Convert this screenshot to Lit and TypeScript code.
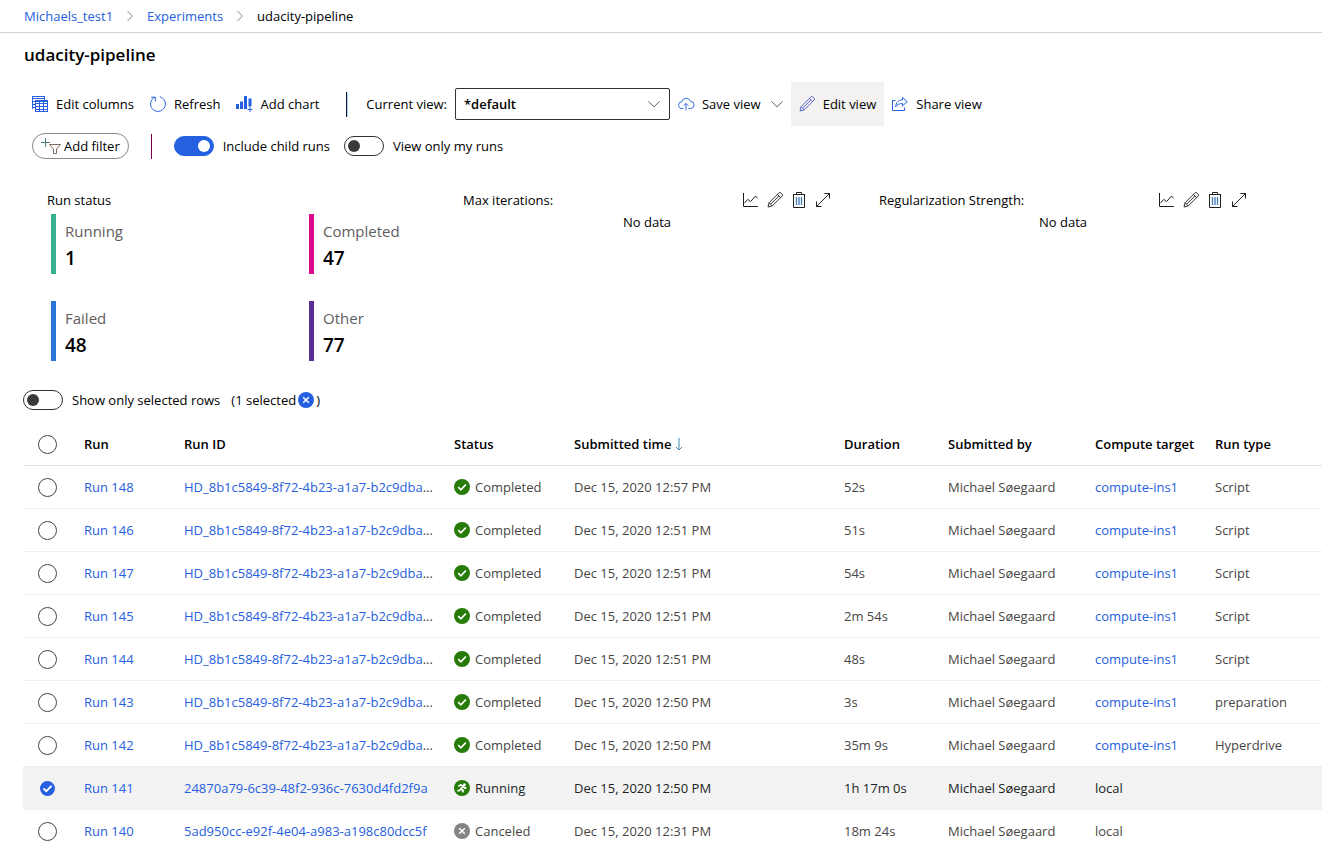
import { LitElement, html, css, svg, nothing } from "lit";
import { customElement, property, state } from "lit/decorators.js";
import { classMap } from "lit/directives/class-map.js";

type Status = "Completed" | "Running" | "Canceled";

interface Run {
  name: string;
  id: string;
  clipped?: boolean;
  status: Status;
  time: string;
  duration: string;
  by: string;
  target: string;
  linked?: boolean;
  type: string;
}

const hd = (n: number, time: string, duration: string, type: string): Run => ({
  name: `Run ${n}`,
  id: "HD_8b1c5849-8f72-4b23-a1a7-b2c9dba",
  clipped: true,
  status: "Completed",
  time: `Dec 15, 2020 ${time} PM`,
  duration,
  by: "Michael Søegaard",
  target: "compute-ins1",
  linked: true,
  type,
});

const RUNS: Run[] = [
  hd(148, "12:57", "52s", "Script"),
  hd(146, "12:51", "51s", "Script"),
  hd(147, "12:51", "54s", "Script"),
  hd(145, "12:51", "2m 54s", "Script"),
  hd(144, "12:51", "48s", "Script"),
  hd(143, "12:50", "3s", "preparation"),
  hd(142, "12:50", "35m 9s", "Hyperdrive"),
  {
    name: "Run 141",
    id: "24870a79-6c39-48f2-936c-7630d4fd2f9a",
    status: "Running",
    time: "Dec 15, 2020 12:50 PM",
    duration: "1h 17m 0s",
    by: "Michael Søegaard",
    target: "local",
    type: "",
  },
  {
    name: "Run 140",
    id: "5ad950cc-e92f-4e04-a983-a198c80dcc5f",
    status: "Canceled",
    time: "Dec 15, 2020 12:31 PM",
    duration: "18m 24s",
    by: "Michael Søegaard",
    target: "local",
    type: "",
  },
];

const ICONS = {
  columns: svg`<g fill="currentColor" shape-rendering="crispEdges">
    <rect x="0" y="0" width="13" height="1"/><rect x="0" y="2" width="13" height="1"/><rect x="0" y="0" width="1" height="13"/><rect x="12" y="0" width="1" height="4"/>
    <rect x="1" y="5" width="2" height="1"/><rect x="1" y="8" width="2" height="1"/><rect x="1" y="11" width="2" height="1"/>
    <rect x="3" y="4" width="13" height="2"/><rect x="3" y="7" width="13" height="1"/><rect x="3" y="10" width="13" height="1"/><rect x="3" y="13" width="13" height="1"/><rect x="3" y="15" width="13" height="1"/>
    <rect x="3" y="4" width="1" height="12"/><rect x="7" y="6" width="1" height="10"/><rect x="11" y="6" width="1" height="10"/><rect x="15" y="4" width="1" height="12"/></g>`,
  refresh: svg`<path d="M9.800 .8A7.400 7.400 0 1 1 5 1.200M1.200 1.200h4.200v4.200" fill="none" stroke="currentColor"/>`,
  chart: svg`<g fill="currentColor"><rect x="0" y="8" width="3" height="5"/><rect x="4" y="5.500" width="3" height="7.500"/><rect x="8" y="0" width="3" height="13"/><path d="M12.500 2.500h3v8h-3z"/><path d="M13.500 11h1v2h2v1h-2v2h-1v-2h-2v-1h2z"/></g>`,
  cloud: svg`<path d="M5.500 12.500H4a3.300 3.300 0 0 1-.3-6.600A4.600 4.600 0 0 1 12.500 5.300a3.600 3.600 0 0 1 0 7.200h-2M8 14.500V7.500M5.700 9.700L8 7.400l2.300 2.300" fill="none" stroke="currentColor" stroke-width=".9"/>`,
  pencil: svg`<path d="M1 15l1.100-4.300L11.900.9a1.300 1.300 0 0 1 1.900 0l1.300 1.300a1.300 1.300 0 0 1 0 1.900L5.300 13.900zM10.400 2.400l3.200 3.200M2.100 10.700l3.200 3.200M11.800 4L3.700 12.200" fill="none" stroke="currentColor" stroke-width=".9"/>`,
  share: svg`<path d="M3.500 4.500h-3v10h12v-3M10.500 1.500l4.800 4.200-4.800 4.200V7.600C7.500 7.500 5.300 8.300 3.600 10.800 4 6.500 6.500 4 10.500 3.800z" fill="none" stroke="currentColor" stroke-linejoin="round"/>`,
  line: svg`<path d="M.5 1v13.500H15M1.500 11l3.300-3.600 2.700 2.200 5-5.600 2 2.200" fill="none" stroke="currentColor"/>`,
  trash: svg`<path d="M2 2.500h12M5.500 2V.5h5V2M2.500 3v12.500h11V3" fill="none" stroke="currentColor"/><path d="M5.500 5v8M8 5v8M10.500 5v8" stroke="#4a86bd" stroke-width="1.400"/>`,
  expand: svg`<path d="M1.500 14.500l13-13M9.500 1.500h5v5M6.500 14.500h-5v-5" fill="none" stroke="currentColor"/>`,
  chevronDown: svg`<path d="M.5 5.500L6 10.800l5.500-5.300" fill="none" stroke="currentColor"/>`,
  chevronRight: svg`<path d="M5.500 3l4.800 5-4.800 5" fill="none" stroke="currentColor"/>`,
  filter: svg`<path d="M4.500 0v9M0 4.500h9" fill="none" stroke="#4a7f79"/><path d="M8.500 6.500h11L15.500 11v4.500h-3V11z" fill="none" stroke="#7d6a5c"/>`,
  sort: svg`<path d="M4 2v12M1 11l3 3 3-3" fill="none" stroke="#3f87b5"/>`,
  close: svg`<circle cx="8" cy="8" r="8" fill="currentColor"/><path d="M5.200 5.200l5.600 5.600M10.800 5.200l-5.600 5.600" stroke="#fff" stroke-width="1.500" fill="none"/>`,
  check: svg`<circle cx="8" cy="8" r="8" fill="currentColor"/><path d="M4.200 8.200l2.700 2.600 5-5.300" stroke="#fff" stroke-width="1.800" fill="none"/>`,
  running: svg`<circle cx="8" cy="8" r="8" fill="currentColor"/><circle cx="10.400" cy="4.700" r="1.500" fill="#fff"/><path d="M4.300 6.300l2.600-1.300 2.300 1.300-2.500 2.700 2.500 1.400-.7 2.200M9.200 6.500l1.300 1.600 2-.3M6.500 9.300L5.300 10.600H3.300" fill="none" stroke="#fff" stroke-width="1.700"/>`,
};

type IconName = keyof typeof ICONS;

const icon = (name: IconName, cls = "", w = 16) => html`<svg
  class="icon ${cls}" width=${w} height="16" viewBox="0 0 ${w} 16" aria-hidden="true"
>${ICONS[name]}</svg>`;

const FONT = css`
  :host {
    font-family: "Open Sans", "Noto Sans", sans-serif;
    font-size: 13px;
    line-height: 20px;
    color: #000;
  }
  .icon {
    display: block;
    flex: none;
    overflow: visible;
  }
  button {
    font: inherit;
    color: inherit;
    background: none;
    border: 0;
    padding: 0;
    cursor: pointer;
  }
`;

@customElement("toggle-switch")
class ToggleSwitch extends LitElement {
  @property() label = "";
  @property({ type: Boolean }) checked = false;

  static styles = [
    FONT,
    css`
      :host {
        display: block;
      }
      label {
        display: flex;
        align-items: center;
        gap: 9px;
        white-space: nowrap;
      }
      input {
        appearance: none;
        box-sizing: border-box;
        flex: none;
        display: flex;
        align-items: center;
        width: 40px;
        height: 20px;
        margin: 0;
        padding: 0 3px;
        border: 1px solid #323130;
        border-radius: 10px;
        background: #fff;
      }
      input::before {
        content: "";
        width: 12px;
        height: 12px;
        border-radius: 50%;
        background: #3b3a39;
      }
      input:checked {
        justify-content: flex-end;
        border-color: #2560e0;
        background: #2560e0;
      }
      input:checked::before {
        background: #fff;
      }
    `,
  ];

  render() {
    return html`<label><input type="checkbox" role="switch" .checked=${this.checked} />${this.label}</label>`;
  }
}

@customElement("metric-card")
class MetricCard extends LitElement {
  @property() heading = "";

  static styles = [
    FONT,
    css`
      :host {
        display: block;
        padding: 0 40px 0 8px;
      }
      header {
        display: flex;
        align-items: center;
        justify-content: space-between;
        height: 20px;
      }
      .tools {
        display: flex;
        gap: 8px;
        color: #201f1e;
      }
      p {
        margin: 2px 0 0;
        text-align: center;
      }
    `,
  ];

  render() {
    const tools: [IconName, string][] = [
      ["line", "Chart type"],
      ["pencil", "Edit"],
      ["trash", "Delete"],
      ["expand", "Expand"],
    ];
    return html`
      <header>
        <span>${this.heading}</span>
        <div class="tools">
          ${tools.map(([name, label]) => html`<button aria-label=${label}>${icon(name)}</button>`)}
        </div>
      </header>
      <p>No data</p>
    `;
  }
}

@customElement("app-root")
class AppRoot extends LitElement {
  @state() private selected = new Set(["Run 141"]);

  static styles = [
    FONT,
    css`
      :host {
        display: block;
        height: 100vh;
        overflow: auto;
        scrollbar-width: none;
        background: #fff;
      }
      a {
        color: #2560e0;
        text-decoration: none;
      }
      .crumbs {
        display: flex;
        align-items: center;
        gap: 9px;
        height: 32px;
        padding: 0 24px;
        border-bottom: 1px solid #d2d0ce;
      }
      .crumbs .icon {
        color: #8a8886;
      }
      h1 {
        margin: 0;
        padding: 10px 24px 0;
        font-size: 17px;
        line-height: 24px;
        font-weight: 600;
      }
      .toolbar {
        display: flex;
        align-items: center;
        height: 44px;
        margin-top: 15px;
        padding: 0 24px;
        white-space: nowrap;
      }
      .tool {
        display: flex;
        align-items: center;
        gap: 8px;
        height: 44px;
        padding: 0 8px;
      }
      .tool .icon {
        color: #2560e0;
      }
      .tool .chevron {
        margin-left: 2px;
        color: #605e5c;
      }
      .tool.active {
        background: #f3f2f1;
      }
      .tool.active .icon {
        color: #4a56c8;
      }
      .rule {
        flex: none;
        width: 1px;
        height: 25px;
        margin: 0 18px 0 19px;
        background: #17102a;
        border-right: 1px solid #a6dcf5;
      }
      .rule.plum {
        margin: 0 22px;
        background: #7a0045;
        border-right: 0;
      }
      .view {
        display: grid;
        align-items: center;
        width: 215px;
        margin-left: 8px;
      }
      .view > * {
        grid-area: 1 / 1;
      }
      .view .icon {
        justify-self: end;
        margin-right: 10px;
        color: #605e5c;
        pointer-events: none;
      }
      select {
        appearance: none;
        width: 100%;
        height: 32px;
        padding: 0 8px;
        border: 1px solid #323130;
        border-radius: 2px;
        background: #fff;
        color: #000;
        font: inherit;
        font-weight: 600;
      }
      .filters {
        display: flex;
        align-items: center;
        height: 26px;
        margin-top: 7px;
        padding: 0 32px;
      }
      .pill {
        display: flex;
        align-items: center;
        gap: 3px;
        height: 26px;
        padding: 0 8px;
        border: 1px solid #8a8886;
        border-radius: 13px;
        white-space: nowrap;
      }
      .filters toggle-switch + toggle-switch {
        margin-left: 14px;
      }
      .cards {
        display: grid;
        grid-template-columns: repeat(auto-fill, minmax(416px, 1fr));
        margin-top: 31px;
        padding: 0 35px 0 39px;
      }
      .status-card {
        padding-left: 8px;
      }
      .stats {
        display: grid;
        grid-template-columns: repeat(2, 258px);
        row-gap: 27px;
        margin: 4px 0 0 4px;
      }
      .stat {
        box-sizing: border-box;
        height: 60px;
        padding: 7px 0 0 9px;
        border-left: 5px solid;
      }
      .stat.running {
        border-color: #37b18d;
      }
      .stat.completed {
        border-color: #da0a8d;
      }
      .stat.failed {
        border-color: #2b76d8;
      }
      .stat.other {
        border-color: #5a2d94;
      }
      .stat dt {
        color: #605e5c;
        font-size: 15px;
      }
      .stat dd {
        margin: 5px 0 0;
        font-size: 19px;
        line-height: 24px;
        font-weight: 600;
      }
      .selection {
        display: flex;
        align-items: center;
        gap: 11px;
        height: 20px;
        margin-top: 29px;
        padding: 0 23px;
        white-space: nowrap;
      }
      .count {
        display: flex;
        align-items: center;
        gap: 2px;
      }
      .count .icon {
        color: #2560e0;
      }
      .grid {
        margin: 13px 0 0 23px;
      }
      table {
        width: 100%;
        min-width: 1200px;
        table-layout: fixed;
        border-collapse: collapse;
        color: #484644;
      }
      th,
      td {
        height: 42px;
        padding: 0 8px 0 12px;
        border-bottom: 1px solid #f0efee;
        text-align: left;
        white-space: nowrap;
      }
      th {
        color: #000;
        font-weight: 600;
        border-bottom-color: #e4e3e1;
      }
      th.pick,
      td.pick {
        padding: 0 0 0 15px;
      }
      tr:last-child td,
      tr.selected td {
        border-bottom-color: transparent;
      }
      thead tr:last-child th {
        border-bottom-color: #e4e3e1;
      }
      tr.selected td {
        background: #f3f3f3;
        color: #201f1e;
      }
      .w-pick {
        width: 49px;
      }
      .w-run {
        width: 100px;
      }
      .w-id,
      .w-time {
        width: 270px;
      }
      .w-status,
      .w-target {
        width: 120px;
      }
      .w-duration {
        width: 104px;
      }
      .w-by {
        width: 147px;
      }
      .pick input {
        appearance: none;
        display: block;
        box-sizing: border-box;
        width: 19px;
        height: 19px;
        margin: 0;
        border: 1px solid #484644;
        border-radius: 50%;
        background: #fff;
      }
      .pick input:checked {
        border: 2px solid #f3f3f3;
        background: #2560e0
          url("data:image/svg+xml,%3Csvg xmlns='http://www.w3.org/2000/svg' viewBox='0 0 15 15'%3E%3Cpath d='M3.500 7.500l2.800 2.700 5.200-5.300' fill='none' stroke='white' stroke-width='1.900'/%3E%3C/svg%3E");
      }
      .status,
      .sorted {
        display: flex;
        align-items: center;
        gap: 5px;
      }
      .sorted {
        gap: 4px;
      }
      .status.Completed .icon,
      .status.Running .icon {
        color: #277b09;
      }
      .status.Canceled .icon {
        color: #868483;
      }
    `,
  ];

  private toggle(name: string) {
    const next = new Set(this.selected);
    if (!next.delete(name)) next.add(name);
    this.selected = next;
  }

  private stat(cls: string, label: string, value: number) {
    return html`<div class="stat ${cls}"><dt>${label}</dt><dd>${value}</dd></div>`;
  }

  private row(run: Run) {
    const on = this.selected.has(run.name);
    const glyph: IconName =
      run.status === "Completed" ? "check" : run.status === "Running" ? "running" : "close";
    return html`<tr class=${classMap({ selected: on })}>
      <td class="pick">
        <input type="checkbox" aria-label="Select ${run.name}" .checked=${on} @change=${() => this.toggle(run.name)} />
      </td>
      <td><a href="#">${run.name}</a></td>
      <td><a href="#">${run.id}</a>${run.clipped ? "..." : nothing}</td>
      <td><div class="status ${run.status}">${icon(glyph)}${run.status}</div></td>
      <td>${run.time}</td>
      <td>${run.duration}</td>
      <td>${run.by}</td>
      <td>${run.linked ? html`<a href="#">${run.target}</a>` : run.target}</td>
      <td>${run.type}</td>
    </tr>`;
  }

  render() {
    return html`
      <nav class="crumbs" aria-label="Breadcrumb">
        <a href="#">Michaels_test1</a>${icon("chevronRight")}
        <a href="#">Experiments</a>${icon("chevronRight")}
        <span>udacity-pipeline</span>
      </nav>
      <main>
        <h1>udacity-pipeline</h1>
        <div class="toolbar">
          <button class="tool">${icon("columns")}Edit columns</button>
          <button class="tool">${icon("refresh")}Refresh</button>
          <button class="tool">${icon("chart")}Add chart</button>
          <span class="rule"></span>
          <label for="view">Current view:</label>
          <div class="view">
            <select id="view"><option>*default</option></select>
            ${icon("chevronDown", "", 12)}
          </div>
          <button class="tool">${icon("cloud")}Save view${icon("chevronDown", "chevron", 12)}</button>
          <button class="tool active">${icon("pencil")}Edit view</button>
          <button class="tool">${icon("share")}Share view</button>
        </div>
        <div class="filters">
          <button class="pill">${icon("filter", "", 20)}Add filter</button>
          <span class="rule plum"></span>
          <toggle-switch label="Include child runs" checked></toggle-switch>
          <toggle-switch label="View only my runs"></toggle-switch>
        </div>
        <section class="cards">
          <div class="status-card">
            <div>Run status</div>
            <dl class="stats">
              ${this.stat("running", "Running", 1)} ${this.stat("completed", "Completed", 47)}
              ${this.stat("failed", "Failed", 48)} ${this.stat("other", "Other", 77)}
            </dl>
          </div>
          <metric-card heading="Max iterations:"></metric-card>
          <metric-card heading="Regularization Strength:"></metric-card>
        </section>
        <div class="selection">
          <toggle-switch label="Show only selected rows"></toggle-switch>
          <div class="count">
            <span>(${this.selected.size} selected</span>
            <button aria-label="Clear selection" @click=${() => (this.selected = new Set())}>${icon("close")}</button>
            <span>)</span>
          </div>
        </div>
        <div class="grid">
          <table>
            <colgroup>
              <col class="w-pick" /><col class="w-run" /><col class="w-id" /><col class="w-status" />
              <col class="w-time" /><col class="w-duration" /><col class="w-by" /><col class="w-target" /><col />
            </colgroup>
            <thead>
              <tr>
                <th class="pick"><input type="checkbox" aria-label="Select all runs" /></th>
                <th>Run</th>
                <th>Run ID</th>
                <th>Status</th>
                <th><div class="sorted">Submitted time ${icon("sort", "", 8)}</div></th>
                <th>Duration</th>
                <th>Submitted by</th>
                <th>Compute target</th>
                <th>Run type</th>
              </tr>
            </thead>
            <tbody>
              ${RUNS.map((run) => this.row(run))}
            </tbody>
          </table>
        </div>
      </main>
    `;
  }
}
